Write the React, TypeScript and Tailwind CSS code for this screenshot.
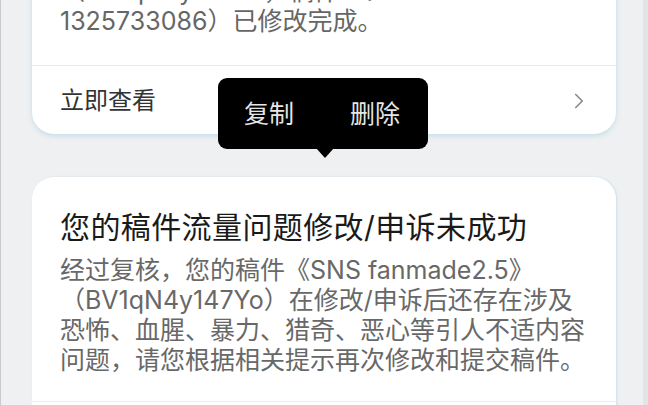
import { ChevronRight } from 'lucide-react';

const MessageList = () => {
  return (
    <div className="relative w-[648px] h-[405px] overflow-hidden bg-[#eff0f2] font-['Inter','Noto_Sans_CJK_SC',sans-serif]">
      {/* 左右边缘 */}
      <div className="absolute left-0 top-0 h-full w-[1px] bg-[#c9cacc]" />
      <div className="absolute right-0 top-0 h-full w-[5px] bg-[#e3e4e6]" />

      <div className="flex flex-col pl-[32px] pr-[32px]">
        {/* 上一条消息 */}
        <div className="-mt-[56px] rounded-[22px] bg-white shadow-[0_2px_5px_rgba(160,205,225,0.55)]">
          <div className="pt-[32px] pb-[29px] px-[28px] text-[25px] leading-[30px] text-[#666666] whitespace-nowrap">
            （BV1qN4y147Yo，稿件ID：
            <br />
            1325733086）已修改完成。
          </div>
          <div className="h-[1px] bg-[#ebebeb]" />
          <div className="flex h-[68px] items-center justify-between pt-[2px] pl-[28px] pr-[24px]">
            <span className="text-[24px] text-[#333333]">立即查看</span>
            <ChevronRight size={26} strokeWidth={1.6} className="text-[#8c8c8c]" />
          </div>
        </div>

        {/* 当前消息 */}
        <div className="mt-[43px] rounded-[22px] bg-white shadow-[1px_0_2px_rgba(170,210,228,0.5)]">
          <div className="pt-[32px] pb-[26px] px-[28px] whitespace-nowrap">
            <div className="text-[30px] leading-[36px] tracking-[0.4px] text-[#1a1a1a]">您的稿件流量问题修改/申诉未成功</div>
            <div className="mt-[10px] text-[25px] leading-[30px] text-[#686868]">
              经过复核，您的稿件《SNS fanmade2.5》
              <br />
              （BV1qN4y147Yo）在修改/申诉后还存在涉及
              <br />
              恐怖、血腥、暴力、猎奇、恶心等引人不适内容
              <br />
              问题，请您根据相关提示再次修改和提交稿件。
            </div>
          </div>
          <div className="h-[1px] bg-[#ebebeb]" />
          <div className="h-[68px]" />
        </div>
      </div>

      {/* 长按菜单 */}
      <div className="absolute left-[218px] top-[78px] w-[210px] h-[71px] rounded-[9px] bg-black flex items-center justify-center gap-[56px] pt-[3px] pr-[2px]">
        <span className="text-[25px] text-[#e6e6e6]">复制</span>
        <span className="text-[25px] text-[#e6e6e6]">删除</span>
        <div className="absolute left-[98px] top-[70px] w-0 h-0 border-l-[9px] border-r-[9px] border-t-[10px] border-l-transparent border-r-transparent border-t-black" />
      </div>
    </div>
  );
};

export default function App() {
  return <MessageList />;
}
